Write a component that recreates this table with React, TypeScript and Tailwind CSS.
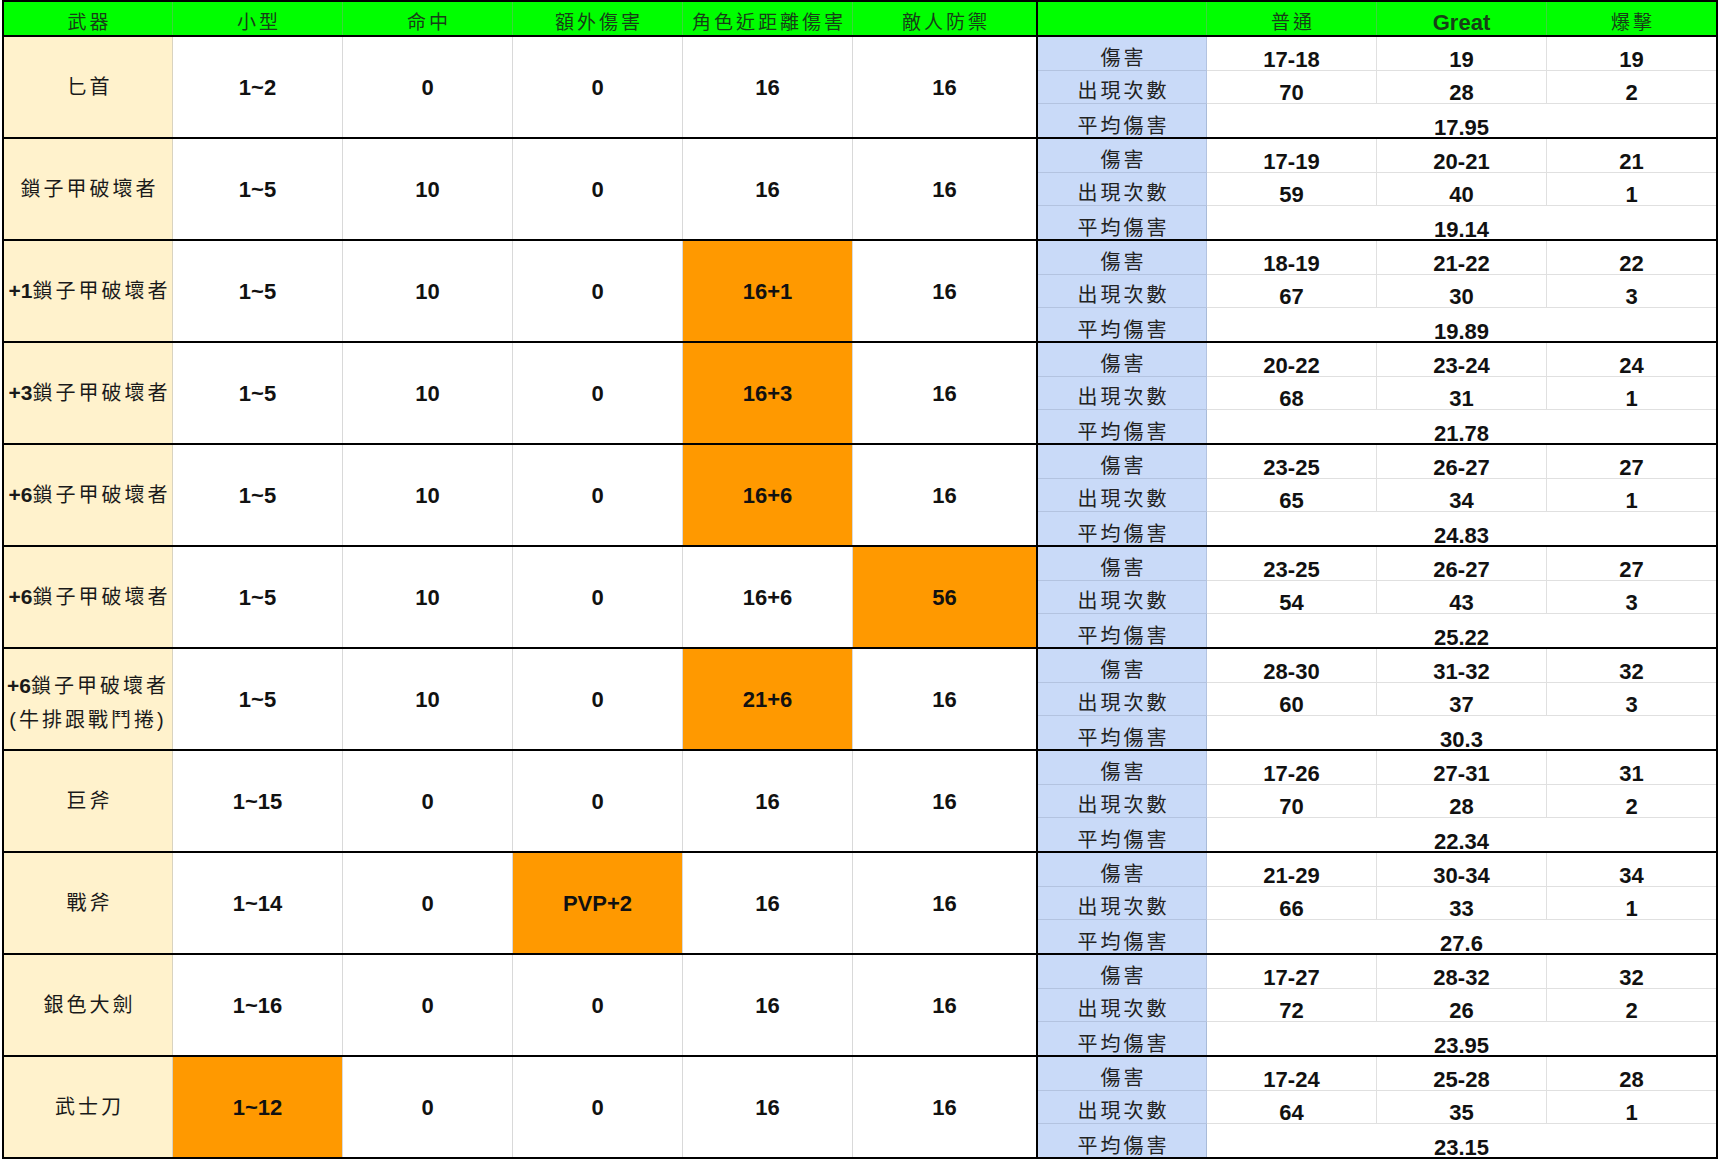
import React from 'react';

type Row = {
    pre?: string;
    name: string;
    sub?: string;
    size: string;
    hit: string;
    extra: string;
    melee: string;
    def: string;
    hl?: 'size' | 'extra' | 'melee' | 'def';
    dmg: [string, string, string];
    cnt: [string, string, string];
    avg: string;
};

const rows: Row[] = [
    { name: '匕首', size: '1~2', hit: '0', extra: '0', melee: '16', def: '16', dmg: ['17-18', '19', '19'], cnt: ['70', '28', '2'], avg: '17.95' },
    { name: '鎖子甲破壞者', size: '1~5', hit: '10', extra: '0', melee: '16', def: '16', dmg: ['17-19', '20-21', '21'], cnt: ['59', '40', '1'], avg: '19.14' },
    { pre: '+1', name: '鎖子甲破壞者', size: '1~5', hit: '10', extra: '0', melee: '16+1', def: '16', hl: 'melee', dmg: ['18-19', '21-22', '22'], cnt: ['67', '30', '3'], avg: '19.89' },
    { pre: '+3', name: '鎖子甲破壞者', size: '1~5', hit: '10', extra: '0', melee: '16+3', def: '16', hl: 'melee', dmg: ['20-22', '23-24', '24'], cnt: ['68', '31', '1'], avg: '21.78' },
    { pre: '+6', name: '鎖子甲破壞者', size: '1~5', hit: '10', extra: '0', melee: '16+6', def: '16', hl: 'melee', dmg: ['23-25', '26-27', '27'], cnt: ['65', '34', '1'], avg: '24.83' },
    { pre: '+6', name: '鎖子甲破壞者', size: '1~5', hit: '10', extra: '0', melee: '16+6', def: '56', hl: 'def', dmg: ['23-25', '26-27', '27'], cnt: ['54', '43', '3'], avg: '25.22' },
    { pre: '+6', name: '鎖子甲破壞者', sub: '牛排跟戰鬥捲', size: '1~5', hit: '10', extra: '0', melee: '21+6', def: '16', hl: 'melee', dmg: ['28-30', '31-32', '32'], cnt: ['60', '37', '3'], avg: '30.3' },
    { name: '巨斧', size: '1~15', hit: '0', extra: '0', melee: '16', def: '16', dmg: ['17-26', '27-31', '31'], cnt: ['70', '28', '2'], avg: '22.34' },
    { name: '戰斧', size: '1~14', hit: '0', extra: 'PVP+2', melee: '16', def: '16', hl: 'extra', dmg: ['21-29', '30-34', '34'], cnt: ['66', '33', '1'], avg: '27.6' },
    { name: '銀色大劍', size: '1~16', hit: '0', extra: '0', melee: '16', def: '16', dmg: ['17-27', '28-32', '32'], cnt: ['72', '26', '2'], avg: '23.95' },
    { name: '武士刀', size: '1~12', hit: '0', extra: '0', melee: '16', def: '16', hl: 'size', dmg: ['17-24', '25-28', '28'], cnt: ['64', '35', '1'], avg: '23.15' },
];

const cols = 'grid grid-cols-[169px_170px_170px_170px_170px_183px_1fr]';
const statCols = 'grid grid-cols-[169px_170px_170px_1fr]';

function Cell({ value, hl, last }: { value: string; hl?: boolean; last?: boolean }) {
    return (
        <div
            className={`flex items-center justify-center text-[22px] font-bold text-[#111] ${
                last ? '' : 'border-r border-[#d9d9d9]'
            } ${hl ? 'bg-[#ff9900]' : 'bg-white'}`}
        >
            {value}
        </div>
    );
}

function Label({ text, last }: { text: string; last?: boolean }) {
    return (
        <div
            className={`flex items-end justify-center bg-[#c9daf8] border-r border-[#a9bbd8] pl-[3px] text-[20px] leading-none tracking-[3px] text-[#222] ${
                last ? 'pb-[1px]' : 'pb-[2px] border-b border-[#b3c3e0]'
            }`}
        >
            {text}
        </div>
    );
}

function Val({ text, last }: { text: string; last?: boolean }) {
    return (
        <div
            className={`flex items-end justify-center border-b border-[#e0e0e0] text-[22px] font-bold leading-[20px] text-[#111] ${
                last ? '' : 'border-r'
            }`}
        >
            {text}
        </div>
    );
}

function HeadCell({ children, last, bold }: { children?: React.ReactNode; last?: boolean; bold?: boolean }) {
    return (
        <div
            className={`flex items-end justify-center leading-none ${
                bold ? 'pb-[1px] text-[22px] font-bold' : 'pb-[3px] pl-[3px] text-[19px] tracking-[3px]'
            } text-[#173f17] ${last ? '' : 'border-r border-[#3ad83a]'}`}
        >
            {children}
        </div>
    );
}

export default function App() {
    return (
        <div className="bg-white min-h-[1163px] pl-[2px]" style={{ fontFamily: '"Liberation Sans", "Noto Sans CJK TC", sans-serif' }}>
            <div className="w-[1716px] border-2 border-black">
                <div className={`${cols} h-[35px] bg-[#00ff00] border-b-2 border-black`}>
                    <HeadCell>武器</HeadCell>
                    <HeadCell>小型</HeadCell>
                    <HeadCell>命中</HeadCell>
                    <HeadCell>額外傷害</HeadCell>
                    <HeadCell>角色近距離傷害</HeadCell>
                    <HeadCell last>敵人防禦</HeadCell>
                    <div className={`${statCols} border-l-2 border-black`}>
                        <HeadCell />
                        <HeadCell>普通</HeadCell>
                        <HeadCell bold>Great</HeadCell>
                        <HeadCell last>爆擊</HeadCell>
                    </div>
                </div>
                {rows.map((r, i) => (
                    <div
                        key={i}
                        className={`${cols} ${i < rows.length - 1 ? 'h-[102px] border-b-2 border-black' : 'h-[100px]'}`}
                    >
                        <div className="flex flex-col items-center justify-center whitespace-nowrap bg-[#fff2cc] border-r border-[#d9d3c0] text-[20px] text-[#1a1a1a]">
                            {r.sub ? (
                                <>
                                    <div className="leading-[34px] pt-[8px]">
                                        <span className="font-bold text-[21px]">{r.pre}</span>
                                        <span className="tracking-[3px]">{r.name}</span>
                                    </div>
                                    <div className="leading-[34px] tracking-[3px]">({r.sub})</div>
                                </>
                            ) : (
                                <div className="pl-[3px]">
                                    {r.pre && <span className="font-bold text-[21px]">{r.pre}</span>}
                                    <span className="tracking-[3px]">{r.name}</span>
                                </div>
                            )}
                        </div>
                        <Cell value={r.size} hl={r.hl === 'size'} />
                        <Cell value={r.hit} />
                        <Cell value={r.extra} hl={r.hl === 'extra'} />
                        <Cell value={r.melee} hl={r.hl === 'melee'} />
                        <Cell value={r.def} hl={r.hl === 'def'} last />
                        <div className={`${statCols} grid-rows-[34px_33px_1fr] border-l-2 border-black`}>
                            <Label text="傷害" />
                            <Val text={r.dmg[0]} />
                            <Val text={r.dmg[1]} />
                            <Val text={r.dmg[2]} last />
                            <Label text="出現次數" />
                            <Val text={r.cnt[0]} />
                            <Val text={r.cnt[1]} />
                            <Val text={r.cnt[2]} last />
                            <Label text="平均傷害" last />
                            <div className="col-span-3 flex items-end justify-center text-[22px] font-bold leading-[19px] text-[#111]">
                                {r.avg}
                            </div>
                        </div>
                    </div>
                ))}
            </div>
        </div>
    );
}
